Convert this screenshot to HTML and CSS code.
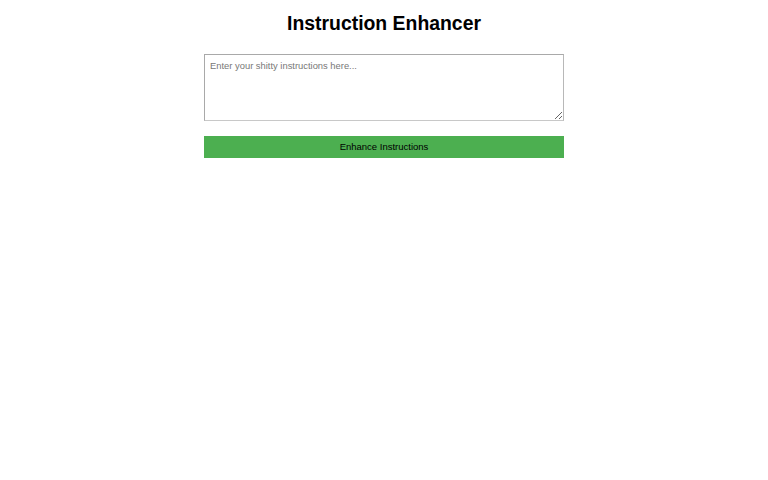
FILE: index.html
```html
<!DOCTYPE html>
<html lang="en">
<head>
    <meta charset="UTF-8">
    <meta name="viewport" content="width=device-width, initial-scale=1.0">
    <title>Instruction Enhancer</title>
    <link rel="stylesheet" href="styles.css">
</head>
<body>
    <div class="container">
        <h1>Instruction Enhancer</h1>
        <textarea id="instructions" placeholder="Enter your shitty instructions here..."></textarea>
        <button id="enhance-btn">Enhance Instructions</button>
        <div id="result"></div>
    </div>
</body>
</html>
```

FILE: styles.css
```css
body {
    margin: 0;
    font-family: "Liberation Sans", Arial, Helvetica, sans-serif;
    background-color: #fff;
}
.container {
    width: 360px;
    margin: 0 auto;
    padding-top: 12px;
}
h1 {
    margin: 0 0 19px;
    font-size: 19.4px;
    line-height: 23px;
    text-align: center;
}
textarea {
    display: block;
    box-sizing: border-box;
    width: 100%;
    height: 67px;
    padding: 5px 5px;
    border: 1px solid #a9a9a9;
    border-bottom-color: #c8c8c8;
    border-right-color: #b8b8b8;
    font-family: inherit;
    font-size: 9.4px;
}
textarea::placeholder {
    color: #777;
}
button {
    display: block;
    width: 100%;
    height: 22px;
    margin-top: 15px;
    padding: 0 0 2px;
    border: none;
    background-color: #4caf50;
    color: #000;
    font-family: inherit;
    font-size: 9.5px;
    cursor: pointer;
}
```
